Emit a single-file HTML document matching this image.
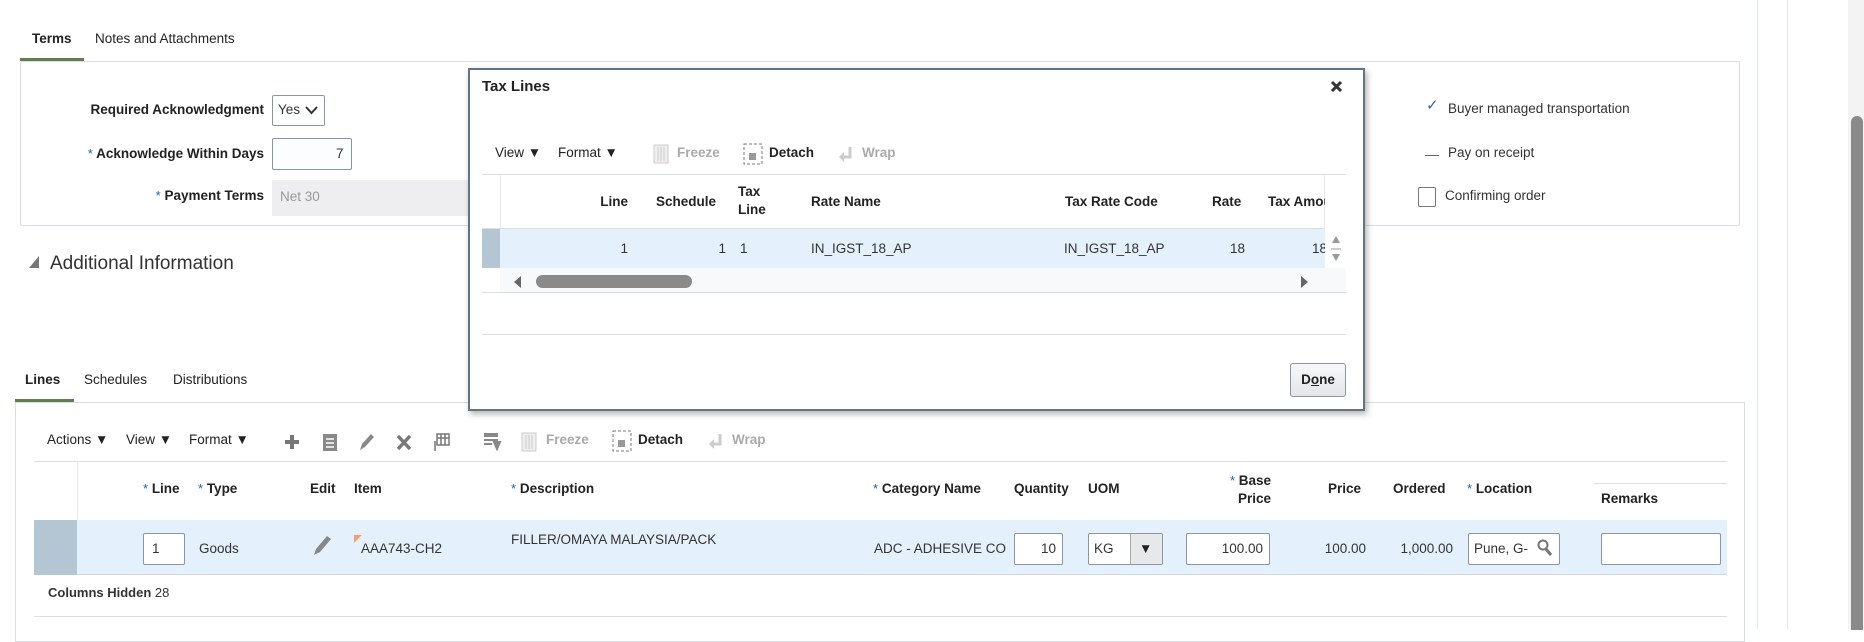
<!DOCTYPE html>
<html><head><meta charset="utf-8"><style>
*{box-sizing:border-box;margin:0;padding:0}
body{width:1864px;height:630px;overflow:hidden;background:#fff;font-family:"Liberation Sans",Arial,sans-serif;font-size:13.5px;color:#333;position:relative}
.a{position:absolute;white-space:nowrap}
.b{font-weight:bold;color:#222}
.ast{color:#1f5fa8;font-weight:normal;font-size:13px;vertical-align:top}
.inp{position:absolute;border:1px solid #8a96a3;background:#fff;border-radius:2px}
.hl{position:absolute;height:1px;background:#d9dee3}
.g{color:#999}
</style></head><body>
<div class="a" style="left:1757px;top:0;width:1px;height:630px;background:#e3e8ec"></div>
<div class="a" style="left:1787px;top:0;width:1px;height:630px;background:#e3e8ec"></div>
<div class="a" style="left:1848px;top:0;width:16px;height:630px;background:#f3f3f3"></div>
<div class="a" style="left:1851px;top:116px;width:12px;height:514px;background:#8a8a8a;border-radius:6px 6px 0 0"></div>

<div class="a b" style="left:32px;top:31px">Terms</div>
<div class="a" style="left:95px;top:31px;color:#222">Notes and Attachments</div>
<div class="a" style="left:20px;top:58px;width:64px;height:3px;background:#5f7d4f"></div>
<div class="a" style="left:20px;top:61px;width:1720px;height:165px;border:1px solid #d9dee3;border-radius:2px"></div>

<div class="a b" style="left:0;width:264px;text-align:right;top:102px">Required Acknowledgment</div>
<div class="inp" style="left:272px;top:95px;width:53px;height:31px"></div>
<div class="a" style="left:278px;top:102px">Yes</div>
<svg class="a" style="left:305px;top:106px" width="13" height="9"><path d="M1 1 L6.5 7 L12 1" stroke="#333" stroke-width="2" fill="none"/></svg>
<div class="a b" style="left:0;width:264px;text-align:right;top:146px"><span class="ast">*</span> Acknowledge Within Days</div>
<div class="inp" style="left:272px;top:138px;width:80px;height:32px;background:#fbfdff"></div>
<div class="a" style="left:336px;top:146px">7</div>
<div class="a b" style="left:0;width:264px;text-align:right;top:188px"><span class="ast">*</span> Payment Terms</div>
<div class="a" style="left:272px;top:180px;width:200px;height:36px;background:#eeeef0"></div>
<div class="a g" style="left:280px;top:189px">Net 30</div>

<svg class="a" style="left:28px;top:255px" width="12" height="14"><path d="M11 1 L11 13 L1 13 Z" fill="#777"/></svg>
<div class="a" style="left:50px;top:253px;font-size:19px;color:#333">Additional Information</div>

<div class="a" style="left:1426px;top:96px;color:#3a5fa0;font-size:15px">✓</div>
<div class="a" style="left:1448px;top:101px">Buyer managed transportation</div>
<div class="a" style="left:1425px;top:155px;width:14px;height:1px;background:#666"></div>
<div class="a" style="left:1448px;top:145px">Pay on receipt</div>
<div class="a" style="left:1418px;top:187px;width:18px;height:20px;border:1px solid #777;border-radius:2px"></div>
<div class="a" style="left:1445px;top:188px">Confirming order</div>

<div class="a b" style="left:25px;top:372px">Lines</div>
<div class="a" style="left:84px;top:372px;color:#222">Schedules</div>
<div class="a" style="left:173px;top:372px;color:#222">Distributions</div>
<div class="a" style="left:15px;top:399px;width:59px;height:3px;background:#5f7d4f"></div>
<div class="a" style="left:15px;top:402px;width:1730px;height:240px;border:1px solid #d9dee3"></div>

<div class="a" style="left:47px;top:432px;color:#222">Actions ▼</div>
<div class="a" style="left:126px;top:432px;color:#222">View ▼</div>
<div class="a" style="left:189px;top:432px;color:#222">Format ▼</div>
<svg class="a" style="left:282px;top:431px" width="200" height="22">
<path d="M3 11 H17 M10 4 V18" stroke="#777" stroke-width="4"/>
<rect x="41" y="3" width="14" height="17" fill="#888"/><path d="M44 8H52M44 12H52M44 16H52" stroke="#fff" stroke-width="1.5"/>
<path d="M78 19 L80 13 L89 3 L92 6 L83 16 Z" fill="#888"/>
<path d="M116 5 L128 18 M128 5 L116 18" stroke="#777" stroke-width="3.5"/>
<rect x="155" y="3" width="12" height="11" fill="none" stroke="#777" stroke-width="1.5"/><path d="M155 7H167M159 3V14M163 3V14M153 10V20" stroke="#777" stroke-width="1.5"/>
</svg>
<svg class="a" style="left:482px;top:431px" width="22" height="22"><rect x="2" y="2" width="14" height="4" fill="#888"/><path d="M2 9H16M2 13H10M12 11 L18 11 L15 18 Z" stroke="#888" stroke-width="2" fill="#888"/></svg>
<svg class="a" style="left:521px;top:432px" width="16" height="20"><rect x="1" y="1" width="14" height="18" fill="#eee" stroke="#ccc"/><path d="M5 3V17M8 3V17M11 3V17" stroke="#ccc"/></svg>
<div class="a b" style="left:546px;top:432px;color:#aaa">Freeze</div>
<svg class="a" style="left:612px;top:430px" width="20" height="22"><rect x="1" y="1" width="18" height="20" fill="none" stroke="#777" stroke-dasharray="3 2"/><rect x="6" y="10" width="7" height="7" fill="#999"/></svg>
<div class="a b" style="left:638px;top:432px">Detach</div>
<svg class="a" style="left:708px;top:432px" width="18" height="20"><path d="M12 2V12H4" stroke="#ccc" stroke-width="3" fill="none"/><path d="M1 12 L6 7 L6 17Z" fill="#ccc"/></svg>
<div class="a b" style="left:732px;top:432px;color:#aaa">Wrap</div>

<div class="hl" style="left:34px;top:461px;width:1693px"></div>
<div class="a" style="left:77px;top:461px;width:1px;height:59px;background:#e6e9ec"></div>
<div class="hl" style="left:1594px;top:483px;width:133px"></div>
<div class="hl" style="left:34px;top:520px;width:1693px"></div>
<div class="a b" style="left:143px;top:481px"><span class="ast">*</span> Line</div>
<div class="a b" style="left:198px;top:481px"><span class="ast">*</span> Type</div>
<div class="a b" style="left:310px;top:481px">Edit</div>
<div class="a b" style="left:354px;top:481px">Item</div>
<div class="a b" style="left:511px;top:481px"><span class="ast">*</span> Description</div>
<div class="a b" style="left:873px;top:481px"><span class="ast">*</span> Category Name</div>
<div class="a b" style="left:1014px;top:481px">Quantity</div>
<div class="a b" style="left:1088px;top:481px">UOM</div>
<div class="a b" style="left:1220px;top:472px;text-align:right;line-height:18px"><span class="ast">*</span> Base<br><span style="padding-left:18px">Price</span></div>
<div class="a b" style="left:1328px;top:481px">Price</div>
<div class="a b" style="left:1393px;top:481px">Ordered</div>
<div class="a b" style="left:1467px;top:481px"><span class="ast">*</span> Location</div>
<div class="a b" style="left:1601px;top:491px">Remarks</div>

<div class="a" style="left:34px;top:520px;width:1693px;height:55px;background:#e4f0fc;border-bottom:1px solid #cfd8e0"></div>
<div class="a" style="left:34px;top:520px;width:43px;height:55px;background:#b4c6d4"></div>
<div class="inp" style="left:143px;top:533px;width:42px;height:32px"></div>
<div class="a" style="left:152px;top:541px">1</div>
<div class="a" style="left:199px;top:541px">Goods</div>
<svg class="a" style="left:312px;top:534px" width="20" height="22"><path d="M2 21 L4 15 L15 2 L19 5 L8 18 Z" fill="#888"/></svg>
<svg class="a" style="left:354px;top:535px" width="8" height="8"><path d="M0 0H8L0 8Z" fill="#f0a070"/></svg>
<div class="a" style="left:361px;top:541px">AAA743-CH2</div>
<div class="a" style="left:511px;top:532px">FILLER/OMAYA MALAYSIA/PACK</div>
<div class="a" style="left:874px;top:541px;width:132px;overflow:hidden">ADC - ADHESIVE CO</div>
<div class="inp" style="left:1014px;top:533px;width:49px;height:32px"></div>
<div class="a" style="left:1014px;width:42px;text-align:right;top:541px">10</div>
<div class="inp" style="left:1088px;top:533px;width:75px;height:32px"></div>
<div class="a" style="left:1130px;top:534px;width:32px;height:30px;background:#e6e8ea;border-left:1px solid #aaa"></div>
<div class="a" style="left:1094px;top:541px">KG</div>
<div class="a" style="left:1139px;top:541px;color:#222">▼</div>
<div class="inp" style="left:1186px;top:533px;width:84px;height:32px"></div>
<div class="a" style="left:1186px;width:77px;text-align:right;top:541px">100.00</div>
<div class="a" style="left:1300px;width:66px;text-align:right;top:541px">100.00</div>
<div class="a" style="left:1380px;width:73px;text-align:right;top:541px">1,000.00</div>
<div class="inp" style="left:1468px;top:533px;width:92px;height:32px"></div>
<div class="a" style="left:1474px;top:541px;width:60px;overflow:hidden">Pune, G-</div>
<svg class="a" style="left:1537px;top:539px" width="16" height="18"><circle cx="6" cy="6" r="4.5" stroke="#777" stroke-width="2" fill="none"/><path d="M9 10 L14 16" stroke="#777" stroke-width="3"/></svg>
<div class="inp" style="left:1601px;top:533px;width:120px;height:32px"></div>
<div class="a b" style="left:48px;top:585px;font-size:13px;color:#333">Columns Hidden <span style="font-weight:normal">28</span></div>
<div class="hl" style="left:34px;top:616px;width:1693px"></div>

<div class="a" style="left:468px;top:68px;width:897px;height:343px;background:#fff;border:2px solid #627587;box-shadow:2px 3px 6px rgba(0,0,0,.3)"></div>
<div class="a b" style="left:482px;top:78px;font-size:15px">Tax Lines</div>
<svg class="a" style="left:1330px;top:80px" width="13" height="13"><path d="M2 2 L11 11 M11 2 L2 11" stroke="#333" stroke-width="3"/></svg>
<div class="a" style="left:495px;top:145px;color:#222">View ▼</div>
<div class="a" style="left:558px;top:145px;color:#222">Format ▼</div>
<svg class="a" style="left:653px;top:144px" width="16" height="20"><rect x="1" y="1" width="14" height="18" fill="#eee" stroke="#ccc"/><path d="M5 3V17M8 3V17M11 3V17" stroke="#ccc"/></svg>
<div class="a b" style="left:677px;top:145px;color:#aaa">Freeze</div>
<svg class="a" style="left:743px;top:143px" width="20" height="22"><rect x="1" y="1" width="18" height="20" fill="none" stroke="#777" stroke-dasharray="3 2"/><rect x="6" y="10" width="7" height="7" fill="#999"/></svg>
<div class="a b" style="left:769px;top:145px">Detach</div>
<svg class="a" style="left:838px;top:145px" width="18" height="20"><path d="M12 2V12H4" stroke="#ccc" stroke-width="3" fill="none"/><path d="M1 12 L6 7 L6 17Z" fill="#ccc"/></svg>
<div class="a b" style="left:862px;top:145px;color:#aaa">Wrap</div>

<div class="hl" style="left:482px;top:174px;width:864px"></div>
<div class="a" style="left:500px;top:174px;width:1px;height:55px;background:#e6e9ec"></div>
<div class="a" style="left:1324px;top:174px;width:1px;height:55px;background:#e6e9ec"></div>
<div class="a" style="left:482px;top:228px;width:843px;height:1px;background:#d9dee3"></div>
<div class="a b" style="left:540px;width:88px;text-align:right;top:194px">Line</div>
<div class="a b" style="left:656px;top:194px">Schedule</div>
<div class="a b" style="left:738px;top:183px;line-height:18px">Tax<br>Line</div>
<div class="a b" style="left:811px;top:194px">Rate Name</div>
<div class="a b" style="left:1065px;top:194px">Tax Rate Code</div>
<div class="a b" style="left:1212px;top:194px">Rate</div>
<div class="a b" style="left:1268px;top:194px;width:57px;overflow:hidden">Tax Amount</div>
<div class="a" style="left:482px;top:229px;width:843px;height:39px;background:#e4f0fc"></div>
<div class="a" style="left:482px;top:229px;width:18px;height:39px;background:#b4c6d4"></div>
<div class="a" style="left:540px;width:88px;text-align:right;top:241px">1</div>
<div class="a" style="left:660px;width:66px;text-align:right;top:241px">1</div>
<div class="a" style="left:740px;top:241px">1</div>
<div class="a" style="left:811px;top:241px">IN_IGST_18_AP</div>
<div class="a" style="left:1064px;top:241px">IN_IGST_18_AP</div>
<div class="a" style="left:1212px;width:33px;text-align:right;top:241px">18</div>
<div class="a" style="left:1312px;width:13px;overflow:hidden;top:241px">18</div>
<svg class="a" style="left:1328px;top:234px" width="16" height="30"><path d="M8 2 L12 9 L4 9Z" fill="#999"/><path d="M3 15H13" stroke="#999"/><path d="M4 20 L12 20 L8 27Z" fill="#999"/></svg>
<div class="a" style="left:500px;top:268px;width:846px;height:24px;background:#f8f9fa"></div>
<svg class="a" style="left:512px;top:275px" width="10" height="14"><path d="M9 1 L2 7 L9 13Z" fill="#666"/></svg>
<div class="a" style="left:536px;top:275px;width:156px;height:13px;border-radius:7px;background:#8a8a8a"></div>
<svg class="a" style="left:1300px;top:275px" width="10" height="14"><path d="M1 1 L8 7 L1 13Z" fill="#666"/></svg>
<div class="hl" style="left:482px;top:292px;width:864px"></div>
<div class="hl" style="left:482px;top:334px;width:864px"></div>
<div class="a" style="left:1290px;top:363px;width:56px;height:34px;border:1px solid #8a96a3;border-radius:3px;background:linear-gradient(#f7f8f9,#e3e6e9)"></div>
<div class="a b" style="left:1290px;width:56px;text-align:center;top:372px"><span>D<u>o</u>ne</span></div>
</body></html>
